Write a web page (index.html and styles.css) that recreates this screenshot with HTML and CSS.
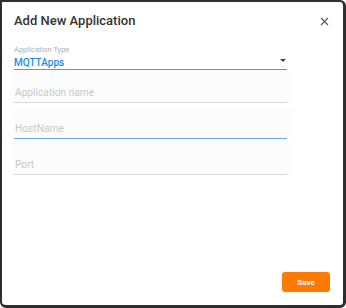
FILE: index.html
```html
<!DOCTYPE html>
<html lang="en">
<head>
    <meta charset="UTF-8">
    <title>Add New Application</title>
    <link rel="stylesheet" href="styles.css">
</head>
<body>
    <div class="dialog">
        <div class="dialog-header">
            <h1>Add New Application</h1>
            <span class="close-btn">
                <svg width="9" height="9" viewBox="0 0 9 9"><path d="M1 1L8 8M8 1L1 8" stroke="#555" stroke-width="1.1"/></svg>
            </span>
        </div>

        <form class="app-form">
            <div class="select-group">
                <label>Application Type</label>
                <div class="select-box">
                    <span class="select-value">MQTTApps</span>
                    <span class="select-arrow"></span>
                </div>
            </div>

            <div class="fields">
                <div class="field">
                    <div class="field-line">Application name</div>
                </div>
                <div class="field">
                    <div class="field-line active">HostName</div>
                </div>
                <div class="field">
                    <div class="field-line">Port</div>
                </div>
            </div>
        </form>

        <div class="dialog-footer">
            <button type="button" class="save-btn">Save</button>
        </div>
    </div>
</body>
</html>
```

FILE: styles.css
```css
* {
    margin: 0;
    padding: 0;
    box-sizing: border-box;
    font-family: 'Roboto', sans-serif;
}

body {
    background: #fff;
}

.dialog {
    width: 346px;
    height: 308px;
    background: #fff;
    border: 2px solid #2e2e2e;
    border-right-width: 3px;
    border-bottom-width: 3px;
    border-radius: 0 6px 6px 6px;
    display: flex;
    flex-direction: column;
}

.dialog-header {
    display: flex;
    justify-content: space-between;
    align-items: center;
    padding: 8px 14px 0 12px;
    height: 28px;
}

.dialog-header h1 {
    font-size: 13px;
    font-weight: 500;
    color: #333;
}

.close-btn {
    display: flex;
    margin-top: 2px;
}

.app-form {
    padding: 15px 0 0 12px;
}

.select-group label {
    display: block;
    font-size: 7.5px;
    color: #b0b0b0;
    line-height: 9px;
}

.select-box {
    width: 273px;
    display: flex;
    justify-content: space-between;
    align-items: center;
    border-bottom: 1px solid #8c8c8c;
    height: 16px;
    padding-top: 1px;
}

.select-value {
    font-size: 10px;
    font-weight: 500;
    color: #1e88e5;
}

.select-arrow {
    width: 0;
    height: 0;
    border-left: 3px solid transparent;
    border-right: 3px solid transparent;
    border-top: 3px solid #444;
    margin-right: 1px;
    margin-bottom: 3px;
}

.fields {
    display: flex;
    flex-direction: column;
    gap: 4px;
    margin-top: 1px;
}

.field {
    width: 278px;
    height: 32px;
    padding-right: 5px;
    background: #fcfcfc;
    display: flex;
    align-items: flex-end;
}

.field-line {
    width: 100%;
    font-size: 10.2px;
    line-height: 14px;
    color: #c8c8c8;
    padding-left: 1px;
    padding-bottom: 2px;
    border-bottom: 1.5px solid #d8d8d8;
}

.field-line.active {
    border-bottom-color: #64a8f0;
}

.dialog-footer {
    margin-top: auto;
    display: flex;
    justify-content: flex-end;
    padding: 0 13px 13px 0;
}

.save-btn {
    width: 48px;
    height: 20px;
    background: #ff7a00;
    border: none;
    border-radius: 3px;
    color: #fff;
    font-size: 8px;
    font-weight: 700;
}
```
